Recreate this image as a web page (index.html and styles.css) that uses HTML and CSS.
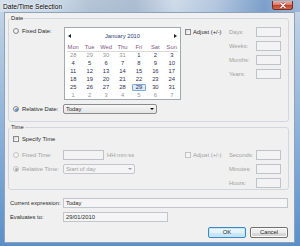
FILE: index.html
```html
<!DOCTYPE html>
<html>
<head>
<meta charset="utf-8">
<title>Date/Time Selection</title>
<link rel="stylesheet" href="styles.css">
</head>
<body>
<div class="window">
  <div class="titlebar">
    <span class="title">Date/Time Selection</span>
    <span class="close">
      <svg width="8" height="7" viewBox="0 0 8 7">
        <path d="M1.5 1 L6.5 6 M6.5 1 L1.5 6" stroke="#5a1d14" stroke-width="2.6" stroke-opacity="0.55" fill="none"/>
        <path d="M1.5 1 L6.5 6 M6.5 1 L1.5 6" stroke="#ffffff" stroke-width="1.3" fill="none"/>
      </svg>
    </span>
  </div>
  <div class="client">
    <fieldset class="group group-date">
      <legend>Date</legend>
      <div class="date-grid">
        <div class="opt opt-top"><span class="radio"></span><span>Fixed Date:</span></div>
        <div class="calendar">
          <div class="cal-head"><span class="arrow left"></span><span class="month">January 2010</span><span class="arrow right"></span></div>
          <div class="cal-days"><span>Mon</span><span>Tue</span><span>Wed</span><span>Thu</span><span>Fri</span><span>Sat</span><span>Sun</span></div>
          <div class="cal-dates">
            <span class="other">28</span><span class="other">29</span><span class="other">30</span><span class="other">31</span><span>1</span><span>2</span><span>3</span>
            <span>4</span><span>5</span><span>6</span><span>7</span><span>8</span><span>9</span><span>10</span>
            <span>11</span><span>12</span><span>13</span><span>14</span><span>15</span><span>16</span><span>17</span>
            <span>18</span><span>19</span><span>20</span><span>21</span><span>22</span><span>23</span><span>24</span>
            <span>25</span><span>26</span><span>27</span><span>28</span><span><b class="sel">29</b></span><span>30</span><span>31</span>
            <span class="other">1</span><span class="other">2</span><span class="other">3</span><span class="other">4</span><span class="other">5</span><span class="other">6</span><span class="other">7</span>
          </div>
        </div>
        <div class="adjust">
          <div class="opt"><span class="check"></span><span>Adjust (+/-)</span></div>
          <span class="lbl dis">Days:</span><span class="box"></span>
          <span class="lbl dis">Weeks:</span><span class="box"></span>
          <span class="lbl dis">Months:</span><span class="box"></span>
          <span class="lbl dis">Years:</span><span class="box"></span>
        </div>
        <div class="opt"><span class="radio on"></span><span>Relative Date:</span></div>
        <div class="combo combo-today"><span>Today</span><span class="caret"></span></div>
      </div>
    </fieldset>

    <fieldset class="group group-time">
      <legend>Time</legend>
      <div class="opt specify"><span class="check"></span><span>Specify Time</span></div>
      <div class="time-grid">
        <div class="opt dis"><span class="radio dis"></span><span>Fixed Time:</span></div>
        <div class="fixed-time"><span class="box box-time"></span><span class="dis">HH:mm:ss</span></div>
        <div class="opt dis adj"><span class="check dis"></span><span>Adjust (+/-)</span></div>
        <span class="lbl dis">Seconds:</span><span class="box"></span>
        <div class="opt dis"><span class="radio dis on"></span><span>Relative Time:</span></div>
        <div class="combo combo-start dis"><span>Start of day</span><span class="caret"></span></div>
        <span class="lbl dis">Minutes:</span><span class="box"></span>
        <span class="lbl dis">Hours:</span><span class="box"></span>
      </div>
    </fieldset>

    <div class="expr">
      <span class="lbl">Current expression:</span><span class="ro">Today</span>
      <span class="lbl">Evaluates to:</span><span class="ro ro-short">29/01/2010</span>
    </div>

    <div class="buttons">
      <span class="btn btn-default">OK</span>
      <span class="btn">Cancel</span>
    </div>
  </div>
</div>
</body>
</html>
```

FILE: styles.css
```css
* { box-sizing: border-box; }
html, body { margin: 0; padding: 0; }
body {
  width: 300px;
  height: 246px;
  overflow: hidden;
  font-family: "Liberation Sans", Arial, sans-serif;
  font-size: 5.8px;
  color: #2a2a2a;
  background: #5b8fc8;
}

.window {
  width: 300px;
  height: 246px;
  display: flex;
  flex-direction: column;
  background: linear-gradient(to bottom, #cad8e7 0, #bccfe3 24px, #8bb0d8 55%, #5a8fc9 100%);
}

.titlebar {
  height: 12px;
  flex: none;
  display: flex;
  align-items: flex-start;
  justify-content: space-between;
  padding: 0 7px 0 3px;
  background: linear-gradient(to right,
    rgba(255,255,255,0.25) 0,
    rgba(255,255,255,0.05) 18%,
    rgba(110,130,155,0.22) 30%,
    rgba(110,130,160,0.30) 45%,
    rgba(255,255,255,0.10) 58%,
    rgba(90,130,180,0.18) 72%,
    rgba(50,105,175,0.50) 88%,
    rgba(90,135,190,0.35) 100%);
}

.title {
  font-size: 6.6px;
  line-height: 10px;
  margin-top: 2px;
  color: #000;
  text-shadow: 0 0 2px #fff, 0 0 3px #fff;
}

.close {
  width: 21px;
  height: 9px;
  margin-top: 1px;
  display: flex;
  align-items: center;
  justify-content: center;
  border: 1px solid #7a2c1f;
  border-top: none;
  border-radius: 0 0 3px 3px;
  background: linear-gradient(to bottom, #eab0a2 0, #d9806c 45%, #c3412a 55%, #d26b52 100%);
}

.client {
  flex: 1;
  margin: 0 5px 3px 4px;
  border: 1px solid #8ea3bb;
  background: #f0f0f0;
  display: flex;
  flex-direction: column;
}

/* group boxes */
.group {
  margin: 1px 5px 0 3px;
  border: 1px solid #d0d7de;
  border-radius: 3px;
  min-width: 0;
}
.group legend {
  font-size: 5.8px;
  line-height: 9px;
  height: 9px;
  padding: 0 1px;
  margin-left: -3px;
  color: #2a2a2a;
}
.group-date { padding: 4px 7px 7px 4px; }
.group-time { padding: 3px 7px 1px 4px; }

.date-grid {
  display: grid;
  grid-template-columns: 50px 122px 96px;
  row-gap: 4px;
}

.opt {
  display: flex;
  align-items: center;
  gap: 3px;
  height: 10px;
  white-space: nowrap;
}
.opt-top { align-self: start; height: 8px; }
.adjust .opt, .opt.adj { gap: 2px; }

.radio {
  flex: none;
  width: 6px;
  height: 6px;
  border-radius: 50%;
  border: 1px solid #8a8a8a;
  background: radial-gradient(circle at 35% 35%, #ffffff, #dadada);
  display: flex;
  align-items: center;
  justify-content: center;
}
.radio.on::after {
  content: "";
  width: 3px;
  height: 3px;
  border-radius: 50%;
  background: radial-gradient(circle at 40% 40%, #86b7e8, #1d5a9b);
}
.radio.dis { border-color: #c3c3c3; background: #f5f5f5; }
.radio.dis.on::after { background: #a8a8a8; }

.check {
  flex: none;
  width: 6px;
  height: 6px;
  border: 1px solid #8a8a8a;
  background: linear-gradient(135deg, #d6d6d6, #f6f6f6 70%, #ffffff);
}
.check.dis { border-color: #c3c3c3; background: #f5f5f5; }

.dis { color: #a0a0a0; }

/* calendar */
.calendar {
  width: 117px;
  height: 73px;
  margin-left: 1px;
  border: 1px solid #a4a9ae;
  background: #ffffff;
  display: flex;
  flex-direction: column;
}
.cal-head {
  height: 16px;
  flex: none;
  display: flex;
  align-items: center;
  justify-content: space-between;
  padding: 0 3px;
}
.month { color: #2a4470; }
.arrow { width: 0; height: 0; border-top: 2.5px solid transparent; border-bottom: 2.5px solid transparent; }
.arrow.left { border-right: 3px solid #222; }
.arrow.right { border-left: 3px solid #222; }

.cal-days {
  height: 8px;
  flex: none;
  display: grid;
  grid-template-columns: repeat(7, 1fr);
  padding-bottom: 1px;
  color: #85557f;
  line-height: 7px;
  text-align: center;
  background: linear-gradient(#dadada, #dadada) no-repeat center bottom / calc(100% - 4px) 1px;
}
.cal-dates {
  flex: 1;
  display: grid;
  grid-template-columns: repeat(7, 1fr);
  grid-template-rows: repeat(6, 1fr);
  color: #2e2e4e;
}
.cal-dates span {
  display: flex;
  align-items: center;
  justify-content: center;
  line-height: 7px;
}
.cal-dates .other { color: #959595; }
.sel {
  font-weight: normal;
  line-height: 5px;
  padding: 0 2.5px;
  border: 1px solid #7fa8da;
  border-radius: 1px;
  background: #dbeafb;
}

/* adjust fields */
.adjust {
  display: grid;
  grid-template-columns: 44px 27px 25px;
  grid-auto-rows: 10px;
  row-gap: 4px;
  align-items: center;
}
.adjust .lbl, .time-grid .lbl { grid-column: 2; white-space: nowrap; }
.adjust .box { grid-column: 3; }
.time-grid .lbl { grid-column: 4; }
.time-grid .box { grid-column: 5; }

.box {
  display: block;
  width: 25px;
  height: 10px;
  border: 1px solid #bfc3c8;
  background: #f3f3f3;
}

/* combos */
.combo {
  height: 10px;
  display: flex;
  align-items: center;
  justify-content: space-between;
  border: 1px solid #8a8c8f;
  border-radius: 2px;
  background: linear-gradient(to bottom, #f7f7f7, #e4e4e4);
  padding: 0 2px 0 2px;
  white-space: nowrap;
  color: #2a2a2a;
}
.combo-today { width: 94px; }
.combo-start { width: 72px; border-color: #c3c6ca; background: #f4f4f4; color: #a0a0a0; }
.caret {
  width: 0;
  height: 0;
  border-left: 2px solid transparent;
  border-right: 2px solid transparent;
  border-top: 2px solid #000;
}
.combo-start .caret { border-top-color: #a0a0a0; }

/* time group */
.specify { height: 8px; }
.time-grid {
  margin-top: 7px;
  display: grid;
  grid-template-columns: 50px 122px 44px 27px 25px;
  grid-auto-rows: 10px;
  row-gap: 4px;
  align-items: center;
}
.fixed-time { display: flex; align-items: center; gap: 3px; white-space: nowrap; }
.box-time { width: 41px; }

/* expression rows */
.expr {
  margin: 8px 6px 0 5px;
  display: grid;
  grid-template-columns: 53px 1fr;
  grid-auto-rows: 10px;
  row-gap: 4px;
  align-items: center;
}
.expr .lbl { white-space: nowrap; }
.ro {
  height: 10px;
  border: 1px solid #c2c6cb;
  background: #f5f5f5;
  padding-left: 2px;
  line-height: 8px;
  white-space: nowrap;
}
.ro-short { width: 105px; }

/* buttons */
.buttons {
  margin: 5px 6px 0 0;
  display: flex;
  justify-content: flex-end;
  gap: 4px;
}
.btn {
  width: 38px;
  height: 11px;
  border: 1px solid #707070;
  border-radius: 2px;
  background: linear-gradient(to bottom, #f2f2f2 0, #ebebeb 50%, #dddddd 50%, #cfcfcf 100%);
  box-shadow: inset 0 0 0 1px #fbfbfb;
  text-align: center;
  line-height: 9px;
  color: #1e1e1e;
}
.btn-default {
  border-color: #3c87c6;
  background: linear-gradient(to bottom, #eef7fd 0, #e2f1fb 50%, #cfe8f8 50%, #c2e1f5 100%);
  box-shadow: inset 0 0 0 1px #c4e6f9;
}
```
